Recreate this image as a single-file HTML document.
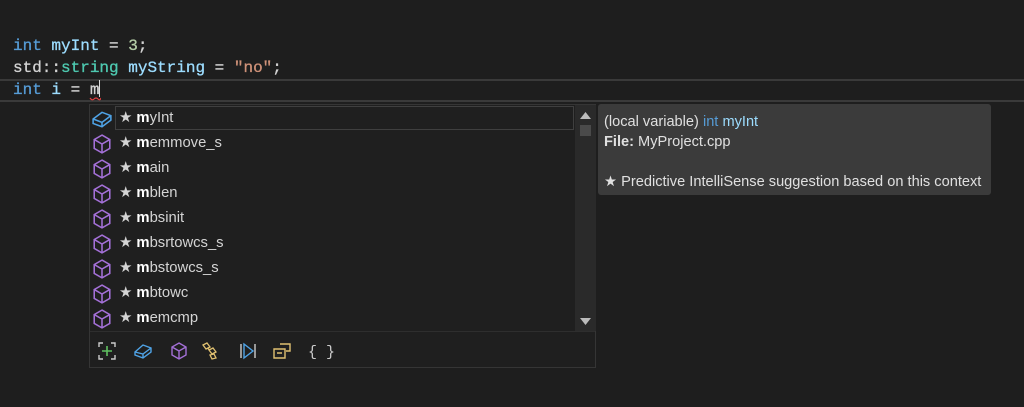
<!DOCTYPE html>
<html><head><style>
body{margin:0;width:1024px;height:407px;background:#1e1e1e;position:relative;overflow:hidden;font-family:"Liberation Sans",sans-serif}
.code{position:absolute;left:13px;font-family:"Liberation Mono",monospace;font-size:16px;color:#d4d4d4;white-space:pre;line-height:22px;-webkit-text-stroke:0.3px}
.k{color:#569cd6}.v{color:#9cdcfe}.n{color:#b5cea8}.t{color:#4ec9b0}.s{color:#ce9178}
.cur{position:absolute;left:0;width:1024px;top:79px;height:19px;border-top:2px solid #3a3a3a;border-bottom:2px solid #3a3a3a}
.pop{position:absolute;left:89px;top:104px;width:507px;height:264px;background:#1f1f1f;border:1px solid #353535;box-sizing:border-box}
.row{position:absolute;left:0;height:25px;width:484px;font-size:14.8px;color:#d4d4d4;line-height:25px}
.row svg{position:absolute;left:2px;top:3px}
.row span{position:absolute;left:29px}
.row b{color:#fff}
.sel{position:absolute;left:25px;top:1px;width:459px;height:24px;border:1px solid #3f3f3f;box-sizing:border-box}
.sb{position:absolute;left:485px;top:0;width:21px;height:226px;background:#2a2a2a}
.tb{position:absolute;left:0;top:226px;width:505px;height:1px;background:#2e2e2e}
.tip{position:absolute;left:598px;top:104px;width:393px;height:91px;background:#3b3b3b;border-radius:3px;color:#e0e0e0;font-size:14.6px;line-height:20px;padding:8px 6px;box-sizing:border-box;white-space:nowrap}
</style></head><body>
<div class="cur"></div>
<div class="code" style="top:35px"><span class="k">int</span> <span class="v">myInt</span> = <span class="n">3</span>;</div>
<div class="code" style="top:57px">std::<span class="t">string</span> <span class="v">myString</span> = <span class="s">"no"</span>;</div>
<div class="code" style="top:79px"><span class="k">int</span> <span class="v">i</span> = m<span style="display:inline-block;width:1px;height:17px;background:#ddd;vertical-align:-3px"></span></div>
<svg style="position:absolute;left:89px;top:97px" width="12" height="5"><path d="M1 1 Q3 4 5 2 T9 2 T12 1" stroke="#e04040" fill="none" stroke-width="1.2"/></svg>
<div class="pop">
<div class="sel"></div>
<div class="sb"><svg style="position:absolute;left:5px;top:7px" width="11" height="8"><path d="M0 7L5.5 0L11 7Z" fill="#bbb"/></svg><div style="position:absolute;left:5px;top:20px;width:11px;height:11px;background:#4a4a4a"></div><svg style="position:absolute;left:5px;top:213px" width="11" height="8"><path d="M0 0L5.5 7L11 0Z" fill="#bbb"/></svg></div>
<div class="tb"></div>
<div class="row" style="top:1px"><svg width="20" height="20" viewBox="0 0 18 18"><path d="M1 9L9 3L17 6V10L9 16L1 13Z M1 9L9 12L17 6 M9 12V16" fill="none" stroke="#4fa3e6" stroke-width="1.4"/></svg><span>★ <b>m</b>yInt</span></div>
<div class="row" style="top:26px"><svg width="20" height="20" viewBox="0 0 18 18"><path d="M9 1L16 5V13L9 17L2 13V5Z M2 5L9 9L16 5 M9 9V17" fill="none" stroke="#a470d8" stroke-width="1.4"/></svg><span>★ <b>m</b>emmove_s</span></div>
<div class="row" style="top:51px"><svg width="20" height="20" viewBox="0 0 18 18"><path d="M9 1L16 5V13L9 17L2 13V5Z M2 5L9 9L16 5 M9 9V17" fill="none" stroke="#a470d8" stroke-width="1.4"/></svg><span>★ <b>m</b>ain</span></div>
<div class="row" style="top:76px"><svg width="20" height="20" viewBox="0 0 18 18"><path d="M9 1L16 5V13L9 17L2 13V5Z M2 5L9 9L16 5 M9 9V17" fill="none" stroke="#a470d8" stroke-width="1.4"/></svg><span>★ <b>m</b>blen</span></div>
<div class="row" style="top:101px"><svg width="20" height="20" viewBox="0 0 18 18"><path d="M9 1L16 5V13L9 17L2 13V5Z M2 5L9 9L16 5 M9 9V17" fill="none" stroke="#a470d8" stroke-width="1.4"/></svg><span>★ <b>m</b>bsinit</span></div>
<div class="row" style="top:126px"><svg width="20" height="20" viewBox="0 0 18 18"><path d="M9 1L16 5V13L9 17L2 13V5Z M2 5L9 9L16 5 M9 9V17" fill="none" stroke="#a470d8" stroke-width="1.4"/></svg><span>★ <b>m</b>bsrtowcs_s</span></div>
<div class="row" style="top:151px"><svg width="20" height="20" viewBox="0 0 18 18"><path d="M9 1L16 5V13L9 17L2 13V5Z M2 5L9 9L16 5 M9 9V17" fill="none" stroke="#a470d8" stroke-width="1.4"/></svg><span>★ <b>m</b>bstowcs_s</span></div>
<div class="row" style="top:176px"><svg width="20" height="20" viewBox="0 0 18 18"><path d="M9 1L16 5V13L9 17L2 13V5Z M2 5L9 9L16 5 M9 9V17" fill="none" stroke="#a470d8" stroke-width="1.4"/></svg><span>★ <b>m</b>btowc</span></div>
<div class="row" style="top:201px"><svg width="20" height="20" viewBox="0 0 18 18"><path d="M9 1L16 5V13L9 17L2 13V5Z M2 5L9 9L16 5 M9 9V17" fill="none" stroke="#a470d8" stroke-width="1.4"/></svg><span>★ <b>m</b>emcmp</span></div>
<svg style="position:absolute;left:8px;top:236px" width="240" height="20" viewBox="0 0 240 20">
<path d="M1 6V2H5 M13 2H17V6 M17 14V18H13 M5 18H1V14" fill="none" stroke="#ccc" stroke-width="1.4"/><path d="M9 5V15M4 10H14" stroke="#5fc060" stroke-width="1.6"/>
<path d="M37 11L45 4L53 7V11L45 17L37 14Z M37 11L45 13L53 7 M45 13V17" fill="none" stroke="#4fa3e6" stroke-width="1.4"/>
<path d="M81 2L88 6V14L81 18L74 14V6Z M74 6L81 10L88 6 M81 10V18" fill="none" stroke="#a470d8" stroke-width="1.4"/>
<path d="M105 4L109 2L112 6L108 8Z M111 9L115 7L118 11L114 13Z M112 14L116 13L118 17L114 18Z M109 7L112 9" fill="none" stroke="#e0c070" stroke-width="1.3"/>
<path d="M146 3L155 10L146 17Z" fill="none" stroke="#4fa3e6" stroke-width="1.4"/><path d="M143 3V17M157 3V17" stroke="#ccc" stroke-width="1.4"/>
<path d="M182 3H192V10H188 M176 8H187V17H176Z M179 12H184" fill="none" stroke="#e0c070" stroke-width="1.4"/>
<text x="210" y="15" fill="#ccc" font-family="Liberation Mono" font-size="15">{ }</text>
</svg>
</div>
<div class="tip">(local variable) <span style="color:#569cd6">int</span> <span style="color:#9cdcfe">myInt</span><br><b>File:</b> MyProject.cpp<br><br>★ Predictive IntelliSense suggestion based on this context</div>
</body></html>
